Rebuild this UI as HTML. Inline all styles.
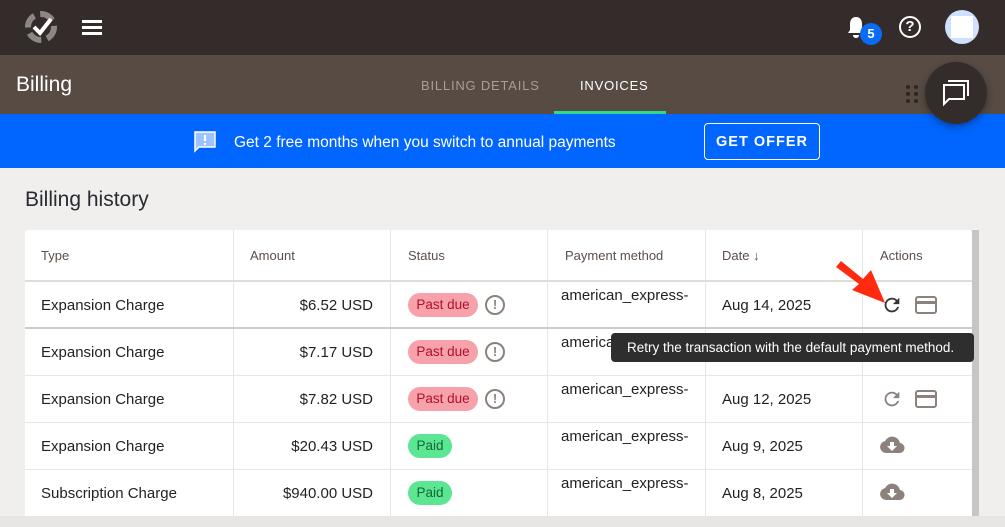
<!DOCTYPE html>
<html><head><meta charset="utf-8"><style>
*{box-sizing:border-box;margin:0;padding:0}
body{width:1005px;height:527px;overflow:hidden;background:#f0efee;font-family:"Liberation Sans",sans-serif;position:relative;color:#222}
.top{position:absolute;left:0;top:0;width:1005px;height:55px;background:#342c2a}
.sec{position:absolute;left:0;top:55px;width:1005px;height:59px;background:#574b44}
.ban{position:absolute;left:0;top:114px;width:1005px;height:54px;background:#0066ff}
.abs{position:absolute}
.tbl{position:absolute;left:25px;top:230px;width:947px;height:297px;background:#fff;border-radius:3px 3px 0 0;overflow:hidden}
.vl{position:absolute;top:0;width:1px;height:297px;background:#e6e6e6}
.hl{position:absolute;left:0;width:947px;height:1px;background:#e6e6e6}
.h{position:absolute;top:18px;font-size:13px;color:#5a4f4a}
.c{position:absolute;font-size:15px;color:#222}
.pd{position:absolute;left:383px;width:70px;height:24px;border-radius:12px;background:#f7a1aa;color:#b0102a;font-size:13.5px;text-align:center;line-height:24px}
.pa{position:absolute;left:383px;width:44px;height:24px;border-radius:12px;background:#5ce693;color:#106a30;font-size:13.5px;text-align:center;line-height:24px}
.ex{position:absolute;left:460px;width:20px;height:20px;border:2px solid #8c827d;border-radius:50%;color:#8c827d;font-size:13px;font-weight:bold;text-align:center;line-height:16px}
</style></head><body>
<div class="top"></div>
<svg class="abs" style="left:24px;top:9px" width="36" height="36" viewBox="0 0 36 36"><circle cx="17" cy="18" r="13" fill="none" stroke="#8c8784" stroke-width="6" stroke-dasharray="14 6"/><path d="M10 18l6 6 11-14" fill="none" stroke="#fff" stroke-width="4"/></svg>
<div class="abs" style="left:82px;top:20px;width:20px;height:2.5px;background:#fff;box-shadow:0 6px 0 #fff,0 12px 0 #fff"></div>
<svg class="abs" style="left:845px;top:15px" width="22" height="24" viewBox="0 0 22 24"><path d="M11 2c-4 0-6 3-6 7v6l-2 3h16l-2-3V9c0-4-2-7-6-7zM8 20h6c0 2-1.5 3-3 3s-3-1-3-3z" fill="#fff"/></svg>
<div class="abs" style="left:860px;top:23px;width:22px;height:22px;border-radius:50%;background:#0a6cf5;color:#fff;font-size:13px;font-weight:bold;text-align:center;line-height:22px">5</div>
<div class="abs" style="left:899px;top:16px;width:22px;height:22px;border:2.5px solid #fff;border-radius:50%;color:#fff;font-size:15px;font-weight:bold;text-align:center;line-height:17px">?</div>
<div class="abs" style="left:945px;top:10px;width:34px;height:34px;border-radius:50%;background:#cfe0ff"></div>
<div class="abs" style="left:951px;top:16px;width:22px;height:22px;background:#fff"></div>
<div class="sec"></div>
<div class="abs" style="left:16px;top:73px;color:#fff;font-size:21px">Billing</div>
<div class="abs" style="left:421px;top:78px;color:#a89e98;font-size:13px;letter-spacing:.8px">BILLING DETAILS</div>
<div class="abs" style="left:580px;top:78px;color:#fff;font-size:13px;letter-spacing:.8px">INVOICES</div>
<div class="abs" style="left:554px;top:111px;width:112px;height:3px;background:#2fd98a"></div>
<svg class="abs" style="left:905px;top:84px" width="14" height="22"><g fill="#2e2624"><circle cx="3" cy="3" r="2"/><circle cx="11" cy="3" r="2"/><circle cx="3" cy="10" r="2"/><circle cx="11" cy="10" r="2"/><circle cx="3" cy="17" r="2"/><circle cx="11" cy="17" r="2"/></g></svg>
<div class="ban"></div>
<svg class="abs" style="left:193px;top:130px" width="24" height="24" viewBox="0 0 24 24"><path d="M2 2h20v15H6l-4 4z" fill="#9ec4ff" stroke="#fff" stroke-width="1.5"/><rect x="11" y="5" width="2" height="6" fill="#fff"/><rect x="11" y="13" width="2" height="2" fill="#fff"/></svg>
<div class="abs" style="left:234px;top:134px;color:#fff;font-size:15.5px">Get 2 free months when you switch to annual payments</div>
<div class="abs" style="left:704px;top:123px;width:116px;height:37px;border:1.5px solid #fff;border-radius:4px;color:#fff;font-size:14.5px;font-weight:bold;letter-spacing:1px;text-align:center;line-height:37px">GET OFFER</div>
<div class="abs" style="left:925px;top:62px;width:62px;height:62px;border-radius:50%;background:#342c2a;box-shadow:0 3px 8px rgba(0,0,0,.35)"></div>
<svg class="abs" style="left:940px;top:77px" width="32" height="32" viewBox="0 0 32 32"><path d="M4 8h20v14H9l-5 5z" fill="none" stroke="#fff" stroke-width="2"/><path d="M8 4h20v15" fill="none" stroke="#fff" stroke-width="2"/></svg>
<div class="abs" style="left:25px;top:188px;font-size:21px;color:#2a2a33">Billing history</div>
<div class="tbl">
<div class="vl" style="left:208px"></div><div class="vl" style="left:365px"></div><div class="vl" style="left:522px"></div><div class="vl" style="left:680px"></div><div class="vl" style="left:837px"></div>
<div class="hl" style="top:50px;height:2px;background:#ddd"></div><div class="hl" style="top:97px;height:2px;background:#ccc"></div><div class="hl" style="top:145px"></div><div class="hl" style="top:192px"></div><div class="hl" style="top:239px"></div><div class="hl" style="top:286px"></div>
<div class="h" style="left:16px">Type</div><div class="h" style="left:225px">Amount</div><div class="h" style="left:383px">Status</div><div class="h" style="left:540px">Payment method</div><div class="h" style="left:697px">Date ↓</div><div class="h" style="left:855px">Actions</div>
<div class="c" style="left:16px;top:67px">Expansion Charge</div><div class="c" style="left:16px;top:114px">Expansion Charge</div><div class="c" style="left:16px;top:161px">Expansion Charge</div><div class="c" style="left:16px;top:208px">Expansion Charge</div><div class="c" style="left:16px;top:255px">Subscription Charge</div>
<div class="c" style="right:599px;top:67px">$6.52 USD</div><div class="c" style="right:599px;top:114px">$7.17 USD</div><div class="c" style="right:599px;top:161px">$7.82 USD</div><div class="c" style="right:599px;top:208px">$20.43 USD</div><div class="c" style="right:599px;top:255px">$940.00 USD</div>
<div class="pd" style="top:63px">Past due</div><div class="ex" style="top:65px">!</div>
<div class="pd" style="top:110px">Past due</div><div class="ex" style="top:112px">!</div>
<div class="pd" style="top:157px">Past due</div><div class="ex" style="top:159px">!</div>
<div class="pa" style="top:204px">Paid</div><div class="pa" style="top:251px">Paid</div>
<div class="c" style="left:536px;top:57px">american_express-</div><div class="c" style="left:536px;top:104px">american_express-</div><div class="c" style="left:536px;top:151px">american_express-</div><div class="c" style="left:536px;top:198px">american_express-</div><div class="c" style="left:536px;top:245px">american_express-</div>
<div class="c" style="left:697px;top:67px">Aug 14, 2025</div><div class="c" style="left:697px;top:161px">Aug 12, 2025</div><div class="c" style="left:697px;top:208px">Aug 9, 2025</div><div class="c" style="left:697px;top:255px">Aug 8, 2025</div>
<svg class="abs" style="left:856px;top:64px" width="22" height="22" viewBox="0 0 24 24"><path d="M17.6 6.4A8 8 0 1 0 19.7 14h-2.1a6 6 0 1 1-1.4-6.2L13 11h7V4z" fill="#3a3330"/></svg>
<svg class="abs" style="left:889px;top:64px" width="24" height="22" viewBox="0 0 24 22"><rect x="2" y="3" width="20" height="16" rx="2" fill="none" stroke="#8c827d" stroke-width="2"/><rect x="2" y="7" width="20" height="3" fill="#8c827d"/></svg>
<svg class="abs" style="left:856px;top:158px" width="22" height="22" viewBox="0 0 24 24"><path d="M17.6 6.4A8 8 0 1 0 19.7 14h-2.1a6 6 0 1 1-1.4-6.2L13 11h7V4z" fill="#8c827d"/></svg>
<svg class="abs" style="left:889px;top:158px" width="24" height="22" viewBox="0 0 24 22"><rect x="2" y="3" width="20" height="16" rx="2" fill="none" stroke="#8c827d" stroke-width="2"/><rect x="2" y="7" width="20" height="3" fill="#8c827d"/></svg>
<svg class="abs" style="left:854px;top:205px" width="26" height="20" viewBox="0 0 26 20"><path d="M7 18a6 6 0 0 1-1-11.9A8 8 0 0 1 21 8a5 5 0 0 1-1 10z" fill="#8c827d"/><path d="M11 7h4v4h3l-5 5-5-5h3z" fill="#fff"/></svg>
<svg class="abs" style="left:854px;top:252px" width="26" height="20" viewBox="0 0 26 20"><path d="M7 18a6 6 0 0 1-1-11.9A8 8 0 0 1 21 8a5 5 0 0 1-1 10z" fill="#8c827d"/><path d="M11 7h4v4h3l-5 5-5-5h3z" fill="#fff"/></svg>
</div>
<div class="abs" style="left:972px;top:230px;width:7px;height:297px;background:#c8c6c4"></div>
<div class="abs" style="left:0;top:516px;width:1005px;height:11px;background:#e8e6e4"></div>
<div class="abs" style="left:611px;top:333px;width:363px;height:29px;background:#2e2e2e;border-radius:4px;color:#fff;font-size:13.5px;line-height:29px;padding-left:16px">Retry the transaction with the default payment method.</div>
<svg class="abs" style="left:830px;top:252px" width="60" height="60" viewBox="0 0 60 60"><path d="M6 15L11 9 33 27 41 18 55 51 22 38 29 32z" fill="#ff2a10"/></svg>
</body></html>
